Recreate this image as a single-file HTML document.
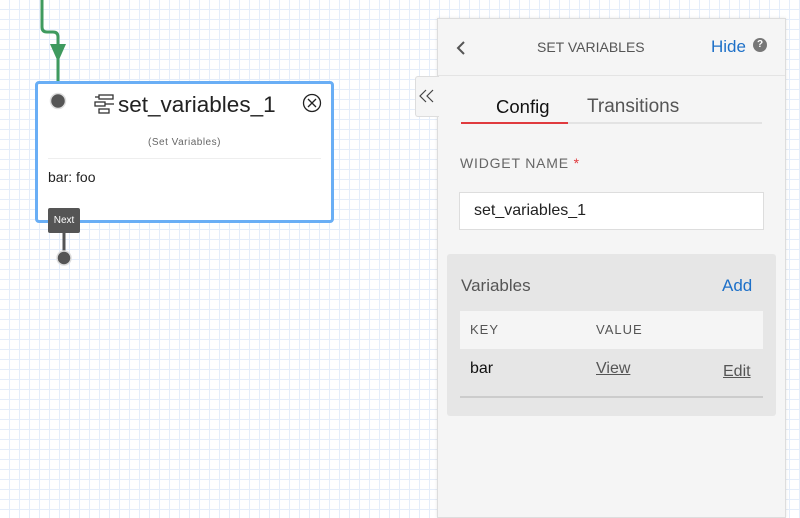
<!DOCTYPE html>
<html><head><style>
*{box-sizing:border-box;margin:0;padding:0}
body{width:800px;height:507px;overflow:hidden;position:relative;font-family:"Liberation Sans",sans-serif;background:#fff;
background-image:linear-gradient(to right,#e4edfa 1px,transparent 1px),linear-gradient(to bottom,#e4edfa 1px,transparent 1px);background-size:10px 10px;background-position:-1px -1px}
.abs{position:absolute}
</style></head><body>
<svg class="abs" style="left:0;top:0" width="120" height="280">
<path d="M42 0 V27 Q42 32 47 32 H53 Q58 32 58 37 V82" stroke="#3f9a5e" stroke-width="3" fill="none"/>
<polygon points="50,44 66,44 58,62" fill="#3f9a5e"/>
<line x1="64" y1="230" x2="64" y2="258" stroke="#555" stroke-width="3"/>
<circle cx="64" cy="258" r="7" fill="#555" stroke="#ddd" stroke-width="1.5"/>
</svg>
<div class="abs" style="left:35px;top:81px;width:299px;height:142px;border:3px solid #69aef5;border-radius:4px;background:#fff"></div>
<svg class="abs" style="left:48px;top:91px" width="20" height="20"><circle cx="10" cy="10" r="7.5" fill="#555" stroke="#ddd" stroke-width="1.5"/></svg>
<svg class="abs" style="left:94px;top:94px" width="22" height="20" fill="none" stroke="#333" stroke-width="1.3"><rect x="5" y="1" width="14" height="4"/><rect x="1" y="8" width="10" height="4"/><rect x="5" y="15" width="10" height="4"/><line x1="1" y1="3" x2="5" y2="3"/><line x1="11" y1="10" x2="20" y2="10"/></svg>
<div class="abs" style="left:118px;top:92px;font-size:22.5px;color:#222">set_variables_1</div>
<svg class="abs" style="left:302px;top:93px" width="20" height="20" fill="none" stroke="#222" stroke-width="1.3"><circle cx="10" cy="10" r="8.5"/><path d="M6 6L14 14M14 6L6 14"/></svg>
<div class="abs" style="left:35px;top:137px;width:299px;text-align:center;font-size:10px;color:#666;letter-spacing:0.5px">(Set Variables)</div>
<div class="abs" style="left:48px;top:158px;width:273px;border-top:1px solid #eee"></div>
<div class="abs" style="left:48px;top:169px;font-size:14px;color:#222">bar: foo</div>
<div class="abs" style="left:48px;top:208px;width:32px;height:25px;background:#555;color:#fff;font-size:10px;text-align:center;line-height:25px;border-radius:2px">Next</div>

<div class="abs" style="left:437px;top:18px;width:349px;height:500px;background:#f5f5f5;border:1px solid #ddd;box-shadow:0 0 3px rgba(0,0,0,.1)"></div>
<div class="abs" style="left:438px;top:75px;width:347px;border-top:1px solid #e4e4e4"></div>
<div class="abs" style="left:415px;top:76px;width:24px;height:41px;background:#f5f5f5;border:1px solid #ddd;border-right:none;border-radius:3px 0 0 3px"></div>
<svg class="abs" style="left:418px;top:88px" width="18" height="16" fill="none" stroke="#444" stroke-width="1.2"><path d="M8 2L2 8L8 14M15 2L9 8L15 14"/></svg>
<svg class="abs" style="left:455px;top:40px" width="12" height="16" fill="none" stroke="#555" stroke-width="2"><path d="M9 2L3 8L9 14"/></svg>
<div class="abs" style="left:537px;top:39px;font-size:14px;color:#555">SET VARIABLES</div>
<div class="abs" style="left:711px;top:37px;font-size:17px;color:#1d70c8">Hide</div>
<div class="abs" style="left:753px;top:38px;width:14px;height:14px;border-radius:50%;background:#777;color:#fff;font-size:10px;font-weight:bold;text-align:center;line-height:14px">?</div>
<div class="abs" style="left:496px;top:96px;font-size:18.5px;color:#111">Config</div>
<div class="abs" style="left:587px;top:96px;font-size:19px;color:#555">Transitions</div>
<div class="abs" style="left:461px;top:122px;width:301px;border-top:2px solid #e3e3e3"></div>
<div class="abs" style="left:461px;top:122px;width:107px;border-top:2px solid #e03a3e"></div>
<div class="abs" style="left:460px;top:155px;font-size:14px;color:#666;letter-spacing:0.8px">WIDGET NAME <span style="color:#e03a3e">*</span></div>
<div class="abs" style="left:459px;top:192px;width:305px;height:38px;background:#fff;border:1px solid #ddd"></div>
<div class="abs" style="left:474px;top:202px;font-size:16px;color:#222">set_variables_1</div>
<div class="abs" style="left:447px;top:254px;width:329px;height:162px;background:#e6e6e6;border-radius:3px"></div>
<div class="abs" style="left:461px;top:276px;font-size:17px;color:#555">Variables</div>
<div class="abs" style="left:722px;top:276px;font-size:17px;color:#1d70c8">Add</div>
<div class="abs" style="left:460px;top:311px;width:303px;height:38px;background:#f5f5f5"></div>
<div class="abs" style="left:470px;top:322px;font-size:13px;color:#555;letter-spacing:1px">KEY</div>
<div class="abs" style="left:596px;top:322px;font-size:13px;color:#555;letter-spacing:1px">VALUE</div>
<div class="abs" style="left:470px;top:360px;font-size:16px;color:#111">bar</div>
<div class="abs" style="left:596px;top:360px;font-size:16px;color:#555;text-decoration:underline">View</div>
<div class="abs" style="left:723px;top:363px;font-size:16px;color:#555;text-decoration:underline">Edit</div>
<div class="abs" style="left:460px;top:396px;width:303px;border-top:2px solid #ccc"></div>
</body></html>
